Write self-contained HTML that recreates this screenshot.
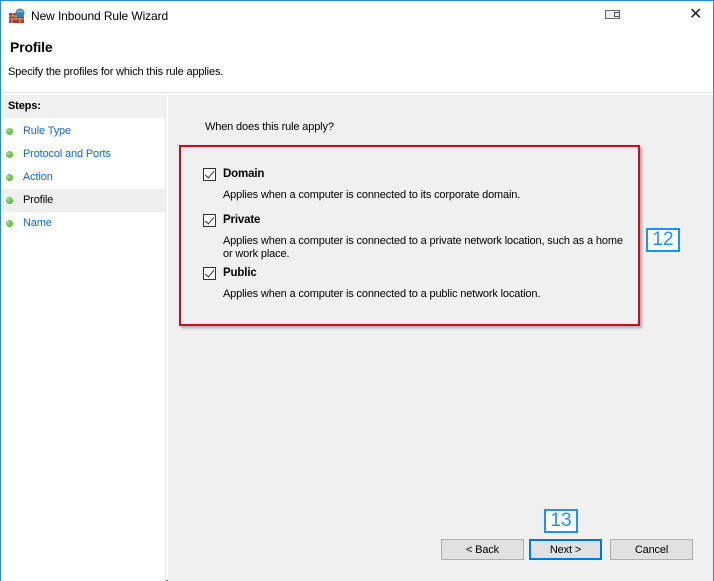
<!DOCTYPE html>
<html><head><style>
*{margin:0;padding:0;box-sizing:border-box}
body{width:714px;height:581px;overflow:hidden;font-family:"Liberation Sans",sans-serif;font-size:11px;letter-spacing:-0.15px;color:#000;background:#fff}
.win{position:absolute;left:0;top:0;width:714px;height:581px;border:1px solid #2b8ad8;background:#fff}
.a{position:absolute}
.steps div.s{position:absolute;left:0;width:164px;height:23px;line-height:23px;padding-left:22px;color:#1a66c8}
.dot{position:absolute;left:5px;top:8px;width:7px;height:7px;border-radius:50%;background:radial-gradient(circle at 35% 35%,#9de07a,#3aa81e)}
.cb{position:absolute;width:13px;height:13px;border:1px solid #333;background:#fff}
.cb:after{content:"";position:absolute;left:3px;top:0px;width:4px;height:8px;border:solid #333;border-width:0 1.5px 1.5px 0;transform:rotate(40deg)}
.btn{position:absolute;top:538px;height:21px;background:#e1e1e1;border:1px solid #adadad;text-align:center;line-height:20px}
.tag{position:absolute;border:2px solid #1e90ff;color:#1e90ff;font-size:19px;text-align:center;background:#fff;line-height:20px;letter-spacing:0}
</style></head><body>
<div class="win">
<svg class="a" style="left:8px;top:7px" width="17" height="15"><rect x="0" y="5" width="15" height="10" fill="#a0402a"/><path d="M0 8h15M0 11h15M4 5v3M10 5v3M7 8v3M3 11v4M11 11v4" stroke="#dca08a" stroke-width="1"/><circle cx="11" cy="5" r="4.5" fill="#2f7ed0"/><path d="M8 4q3-2 6 0" stroke="#7cc06a" stroke-width="2" fill="none"/></svg>
<div class="a" style="left:30px;top:8px;font-size:12px;letter-spacing:-0.1px">New Inbound Rule Wizard</div>
<div class="a" style="left:604px;top:9px;width:15px;height:9px;border:1px solid #666;background:#eee"></div>
<div class="a" style="left:613px;top:11px;width:6px;height:5px;border:1px solid #555"></div>
<div class="a" style="left:688px;top:3px;font-size:16px;color:#222">✕</div>
<div class="a" style="left:9px;top:38px;font-size:14px;font-weight:bold">Profile</div>
<div class="a" style="left:7px;top:65px">Specify the profiles for which this rule applies.</div>
<div class="a" style="left:0;top:91px;width:712px;height:1px;background:#e3e3e3"></div>
<div class="a" style="left:0;top:94px;width:165px;height:486px;background:#fff;border-right:1px solid #e8e8e8"></div>
<div class="a" style="left:0;top:94px;width:164px;height:23px;background:#f0f0f0;font-weight:bold;line-height:23px;padding-left:7px">Steps:</div>
<div class="a steps" style="left:0;top:119px;width:164px">
<div class="s" style="top:0"><span class="dot"></span>Rule Type</div>
<div class="s" style="top:23px"><span class="dot"></span>Protocol and Ports</div>
<div class="s" style="top:46px"><span class="dot"></span>Action</div>
<div class="s" style="top:69px;background:#efefef;color:#000"><span class="dot"></span>Profile</div>
<div class="s" style="top:92px"><span class="dot"></span>Name</div>
</div>
<div class="a" style="left:167px;top:94px;width:545px;height:486px;background:#f0f0f0"></div>
<div class="a" style="left:204px;top:120px">When does this rule apply?</div>
<div class="a" style="left:178px;top:144px;width:461px;height:181px;border:2px solid #c8101a;box-shadow:2px 2px 3px rgba(0,0,0,.3)"></div>
<div class="cb" style="left:202px;top:167px"></div>
<div class="a" style="left:222px;top:167px;font-weight:bold;font-size:11.5px">Domain</div>
<div class="a" style="left:222px;top:188px">Applies when a computer is connected to its corporate domain.</div>
<div class="cb" style="left:202px;top:213px"></div>
<div class="a" style="left:222px;top:213px;font-weight:bold;font-size:11.5px">Private</div>
<div class="a" style="left:222px;top:234px;width:404px;line-height:13px">Applies when a computer is connected to a private network location, such as a home or work place.</div>
<div class="cb" style="left:202px;top:266px"></div>
<div class="a" style="left:222px;top:266px;font-weight:bold;font-size:11.5px">Public</div>
<div class="a" style="left:222px;top:287px">Applies when a computer is connected to a public network location.</div>
<div class="tag" style="left:645px;top:227px;width:34px;height:24px">12</div>
<div class="tag" style="left:543px;top:508px;width:34px;height:24px">13</div>
<div class="btn" style="left:440px;width:83px">&lt; Back</div>
<div class="btn" style="left:528px;width:73px;border:2px solid #0078d7;line-height:18px">Next &gt;</div>
<div class="btn" style="left:609px;width:83px">Cancel</div>
</div>
</body></html>
